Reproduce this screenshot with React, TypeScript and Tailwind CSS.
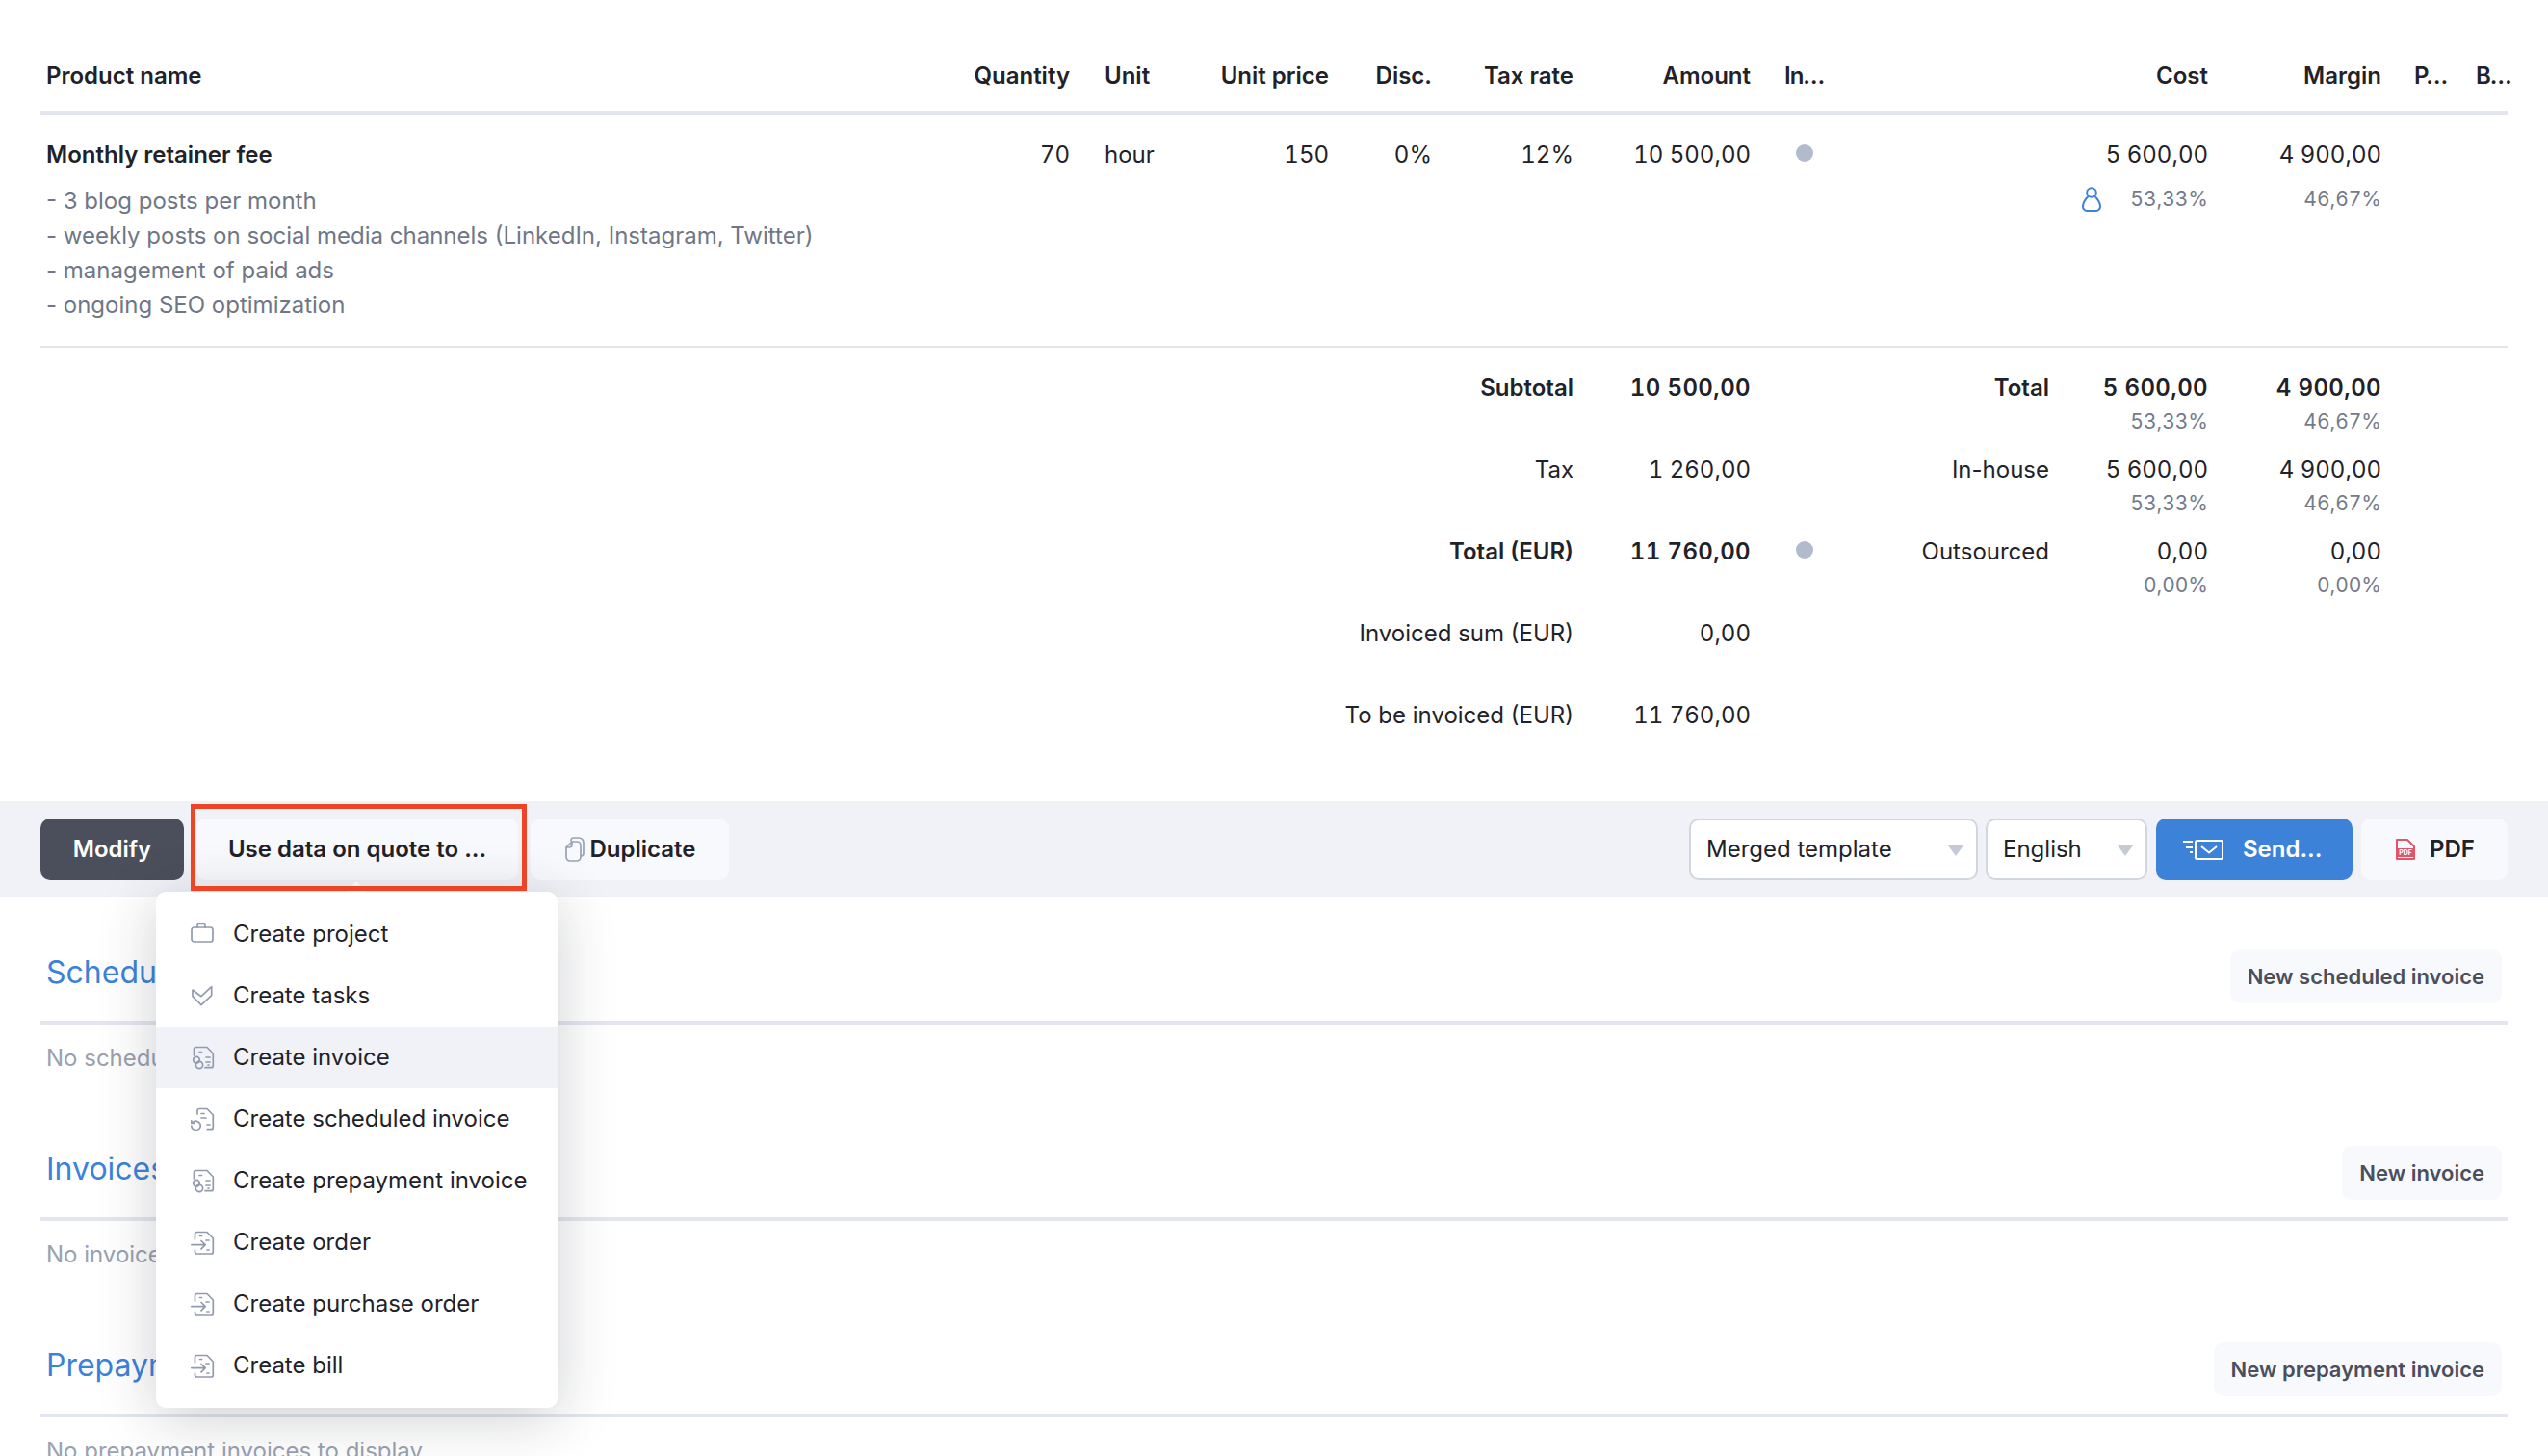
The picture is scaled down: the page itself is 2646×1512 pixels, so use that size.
import React from 'react';

const COLS = 'grid grid-cols-[962px_112px_124px_145px_107px_147px_184px_77px_398px_180px_62px_64px]';
const TOTALS = 'grid grid-cols-[1597px_184px_310px_165px_180px] h-[85px]';
const NUM = 'pr-[5px] text-right tabular-nums';
const PCT = 'text-[21px] text-[#737b8b] tabular-nums';

const Dot = () => <span className="block w-[18px] h-[18px] rounded-full bg-[#b2bbcb]" />;

const iconProps = {
  width: 26,
  height: 26,
  viewBox: '0 0 26 26',
  fill: 'none',
  stroke: '#929bae',
  strokeWidth: 1.7,
  strokeLinecap: 'round' as const,
  strokeLinejoin: 'round' as const,
};

const BriefcaseIcon = () => (
  <svg {...iconProps}>
    <rect x="1" y="6" width="22" height="15" rx="2.5" />
    <path d="M7 6V4a1.5 1.5 0 0 1 1.5-1.5h5A1.5 1.5 0 0 1 15 4v2" />
  </svg>
);

const TasksIcon = () => (
  <svg {...iconProps}>
    <path d="M2 7l9 6.7L21.7 3.7v9L11 22.7l-9-9z" />
  </svg>
);

const InvoiceIcon = () => (
  <svg {...iconProps}>
    <path d="M3.5 11V4.5a2 2 0 0 1 2-2H17l6.3 6.5v12.7a2 2 0 0 1-2 2H15" />
    <path d="M9 7.5h2.5M16 13h4M16 18h4M18 21h1" />
    <circle cx="6" cy="15.7" r="3.3" />
    <circle cx="9" cy="21" r="3.6" />
  </svg>
);

const ScheduledIcon = () => (
  <svg {...iconProps}>
    <path d="M7 8V4.5a2 2 0 0 1 2-2h8l6.3 6.5v12.7a2 2 0 0 1-2 2h-4" />
    <path d="M11 7.5h3M11 12h5M17 19h3" />
    <path d="M0.8 20a4.7 4.7 0 1 0 1.6-3.6M0.8 14.5v3h3" />
  </svg>
);

const ImportIcon = () => (
  <svg {...iconProps}>
    <path d="M4.5 10V4.5a2 2 0 0 1 2-2H17l6.3 6.5v14a2 2 0 0 1-2 2H6.5a2 2 0 0 1-2-2v-2" />
    <path d="M9.5 6.5h2M16 11h3M17 21h2" />
    <path d="M0.8 15.7H15M11 11.5l4.2 4.2-4.2 4.2" />
  </svg>
);

const menu = [
  { label: 'Create project', icon: <BriefcaseIcon /> },
  { label: 'Create tasks', icon: <TasksIcon /> },
  { label: 'Create invoice', icon: <InvoiceIcon />, active: true },
  { label: 'Create scheduled invoice', icon: <ScheduledIcon /> },
  { label: 'Create prepayment invoice', icon: <InvoiceIcon /> },
  { label: 'Create order', icon: <ImportIcon /> },
  { label: 'Create purchase order', icon: <ImportIcon /> },
  { label: 'Create bill', icon: <ImportIcon /> },
];

const sections = [
  { title: 'Scheduled invoices', empty: 'No scheduled invoices to display', action: 'New scheduled invoice' },
  { title: 'Invoices', empty: 'No invoices to display', action: 'New invoice' },
  { title: 'Prepayment invoices', empty: 'No prepayment invoices to display', action: 'New prepayment invoice' },
];

const TotalRow = ({
  label,
  value,
  bold,
  dot,
  side,
}: {
  label: string;
  value: string;
  bold?: boolean;
  dot?: boolean;
  side?: { label: string; cost: string; costPct: string; margin: string; marginPct: string; bold?: boolean };
}) => (
  <div className={TOTALS}>
    <div className={`pr-[5px] text-right ${bold ? 'font-semibold' : ''}`}>{label}</div>
    <div className={`${NUM} ${bold ? 'font-semibold tracking-[0.4px]' : ''}`}>{value}</div>
    <div className="relative pl-[42px] pt-[7px]">
      {dot && <Dot />}
      {side && (
        <div className={`absolute right-[5px] top-0 whitespace-nowrap ${side.bold ? 'font-semibold' : ''}`}>
          {side.label}
        </div>
      )}
    </div>
    {side && (
      <>
        <div className={NUM}>
          <div className={side.bold ? 'font-semibold tracking-[0.4px]' : ''}>{side.cost}</div>
          <div className={`-mt-[1px] ${PCT}`}>{side.costPct}</div>
        </div>
        <div className={NUM}>
          <div className={side.bold ? 'font-semibold tracking-[0.4px]' : ''}>{side.margin}</div>
          <div className={`-mt-[1px] ${PCT}`}>{side.marginPct}</div>
        </div>
      </>
    )}
  </div>
);

export default function App() {
  return (
    <div className="relative h-[1512px] w-[2646px] overflow-hidden bg-white font-['Inter',sans-serif] text-[24px] leading-[36px] text-[#1f2229]">
      <div className="px-[42px]">
        {/* Line items */}
        <div className={`${COLS} pt-[61px] pb-[18px] border-b-4 border-[#e3e6ec] font-semibold`}>
          <div className="pl-[6px]">Product name</div>
          <div className="pr-[5px] text-right whitespace-nowrap">Quantity</div>
          <div className="pl-[31px]">Unit</div>
          <div className="pr-[5px] text-right">Unit price</div>
          <div className="pr-[5px] text-right">Disc.</div>
          <div className="pr-[5px] text-right">Tax rate</div>
          <div className="pr-[5px] text-right">Amount</div>
          <div className="pl-[30px] tracking-[-1px]">In…</div>
          <div className="pr-[5px] text-right">Cost</div>
          <div className="pr-[5px] text-right">Margin</div>
          <div className="pl-[29px] tracking-[-1px]">P…</div>
          <div className="pl-[31px] tracking-[-1px]">B…</div>
        </div>
        <div className={`${COLS} pt-[24px] pb-[24px] border-b-2 border-[#e3e6ec]`}>
          <div className="pl-[6px]">
            <div className="font-semibold">Monthly retainer fee</div>
            <div className="mt-[12px] text-[#6f7787] whitespace-nowrap">
              <div>- 3 blog posts per month</div>
              <div>- weekly posts on social media channels (LinkedIn, Instagram, Twitter)</div>
              <div>- management of paid ads</div>
              <div>- ongoing SEO optimization</div>
            </div>
          </div>
          <div className={NUM}>70</div>
          <div className="pl-[31px]">hour</div>
          <div className={NUM}>150</div>
          <div className={NUM}>0%</div>
          <div className={NUM}>12%</div>
          <div className={NUM}>10 500,00</div>
          <div className="pl-[42px] pt-[7px]">
            <Dot />
          </div>
          <div className={NUM}>
            <div>5 600,00</div>
            <div className={`mt-[10px] flex items-center justify-end gap-[30px] ${PCT}`}>
              <svg width="20" height="26" viewBox="0 0 20 26" fill="none" stroke="#3d82d9" strokeWidth="2">
                <circle cx="10" cy="6" r="4.8" />
                <path d="M6.5 10C3.5 13 1 17 1 20.5 1 23 3 25 5 25h10c2 0 4-2 4-4.5C19 17 16.5 13 13.5 10" />
              </svg>
              <span>53,33%</span>
            </div>
          </div>
          <div className={NUM}>
            <div>4 900,00</div>
            <div className={`mt-[10px] ${PCT}`}>46,67%</div>
          </div>
        </div>

        {/* Totals */}
        <div className="pt-[24px]">
          <TotalRow
            label="Subtotal"
            value="10 500,00"
            bold
            side={{ label: 'Total', cost: '5 600,00', costPct: '53,33%', margin: '4 900,00', marginPct: '46,67%', bold: true }}
          />
          <TotalRow
            label="Tax"
            value="1 260,00"
            side={{ label: 'In-house', cost: '5 600,00', costPct: '53,33%', margin: '4 900,00', marginPct: '46,67%' }}
          />
          <TotalRow
            label="Total (EUR)"
            value="11 760,00"
            bold
            dot
            side={{ label: 'Outsourced', cost: '0,00', costPct: '0,00%', margin: '0,00', marginPct: '0,00%' }}
          />
          <TotalRow label="Invoiced sum (EUR)" value="0,00" />
          <TotalRow label="To be invoiced (EUR)" value="11 760,00" />
        </div>
      </div>

      {/* Action bar */}
      <div className="absolute left-0 right-0 top-[832px] flex h-[100px] items-center justify-between bg-[#f1f2f7] px-[42px]">
        <div className="flex gap-[13px]">
          <button className="h-[64px] w-[149px] rounded-[10px] bg-[#4b4f5c] font-semibold text-white">Modify</button>
          <button className="h-[64px] w-[334px] rounded-[10px] bg-[#f8f9fc] font-semibold">Use data on quote to ...</button>
          <button className="flex h-[64px] w-[206px] items-center justify-center gap-[5px] rounded-[10px] bg-[#f8f9fc] font-semibold">
            <svg width="22" height="26" viewBox="0 0 22 26" fill="none" stroke="#9aa3b5" strokeWidth="1.7" strokeLinejoin="round" strokeLinecap="round">
              <path d="M7 4V3.5A2.5 2.5 0 0 1 9.5 1h5.5a5 5 0 0 1 5 5v11a3 3 0 0 1-2.5 3" />
              <path d="M8 5h5a4 4 0 0 1 4 4v12a4 4 0 0 1-4 4H6a4 4 0 0 1-4-4v-10z" />
              <path d="M8 5v3a3 3 0 0 1-3 3H2" />
            </svg>
            Duplicate
          </button>
        </div>
        <div className="flex gap-[9px]">
          <div className="relative flex h-[64px] w-[300px] items-center rounded-[10px] border-2 border-[#d2d6e0] bg-white pl-[16px]">
            Merged template
            <span className="absolute right-[13px] top-[26px] h-0 w-0 border-x-[8px] border-t-[11px] border-x-transparent border-t-[#c5cad6]" />
          </div>
          <div className="relative -ml-px flex h-[64px] w-[168px] items-center rounded-[10px] border-2 border-[#d2d6e0] bg-white pl-[16px]">
            English
            <span className="absolute right-[13px] top-[26px] h-0 w-0 border-x-[8px] border-t-[11px] border-x-transparent border-t-[#c5cad6]" />
          </div>
          <button className="flex h-[64px] w-[204px] items-center gap-[20px] rounded-[10px] bg-[#3d82d9] pl-[27px] font-semibold text-white">
            <svg width="43" height="24" viewBox="0 0 43 24" fill="none" stroke="white" strokeWidth="2" strokeLinejoin="round">
              <rect x="14" y="3" width="28" height="19" rx="1.5" />
              <path d="M20 9l8 6.5 8-6.5M1 4h10M4 10h7M8 15h3" />
            </svg>
            Send...
          </button>
          <button className="flex h-[64px] w-[152px] items-center gap-[14px] rounded-[10px] bg-[#f8f9fc] pl-[35px] font-semibold">
            <svg width="22" height="24" viewBox="0 0 22 24" fill="none">
              <path d="M2 2h11l7 7v13H2z" stroke="#e0556a" strokeWidth="2" strokeLinejoin="round" />
              <rect x="1" y="11" width="20" height="9" fill="#e0556a" />
              <text x="11" y="18" fontSize="7" fontWeight="700" fill="white" textAnchor="middle" fontFamily="Inter">
                PDF
              </text>
            </svg>
            PDF
          </button>
        </div>
      </div>

      {/* Sections under the bar */}
      <div className="absolute left-[42px] right-[42px] top-[986px]">
        {sections.map(s => (
          <div key={s.title} className="mb-[73px]">
            <div className="flex items-start justify-between border-b-4 border-[#e3e6ee] pb-[18px] pl-[6px] pr-[6px]">
              <h2 className="mt-[2px] text-[32px] leading-[44px] text-[#3d82d9]">{s.title}</h2>
              <button className="h-[56px] rounded-[10px] bg-[#f8f9fc] px-[18px] text-[22px] font-semibold text-[#4b4f5c]">
                {s.action}
              </button>
            </div>
            <div className="mt-[17px] pl-[6px] text-[#9aa1af]">{s.empty}</div>
          </div>
        ))}
      </div>

      {/* Dropdown pointer */}
      <span className="absolute left-[359px] top-[915px] h-0 w-0 border-x-[11px] border-b-[11px] border-x-transparent border-b-white" />

      {/* Dropdown */}
      <div className="absolute left-[162px] top-[926px] w-[417px] rounded-[10px] bg-white py-[12px] shadow-[0_10px_60px_rgba(30,35,50,0.22)]">
        {menu.map(item => (
          <div
            key={item.label}
            className={`flex h-[64px] items-center gap-[18px] pl-[36px] whitespace-nowrap ${item.active ? 'bg-[#f1f2f7]' : ''}`}
          >
            <span className="flex w-[26px] justify-start">{item.icon}</span>
            {item.label}
          </div>
        ))}
      </div>

      {/* Annotation */}
      <div className="absolute left-[198px] top-[835px] h-[90px] w-[349px] border-[5px] border-[#ee4426]" />
    </div>
  );
}
